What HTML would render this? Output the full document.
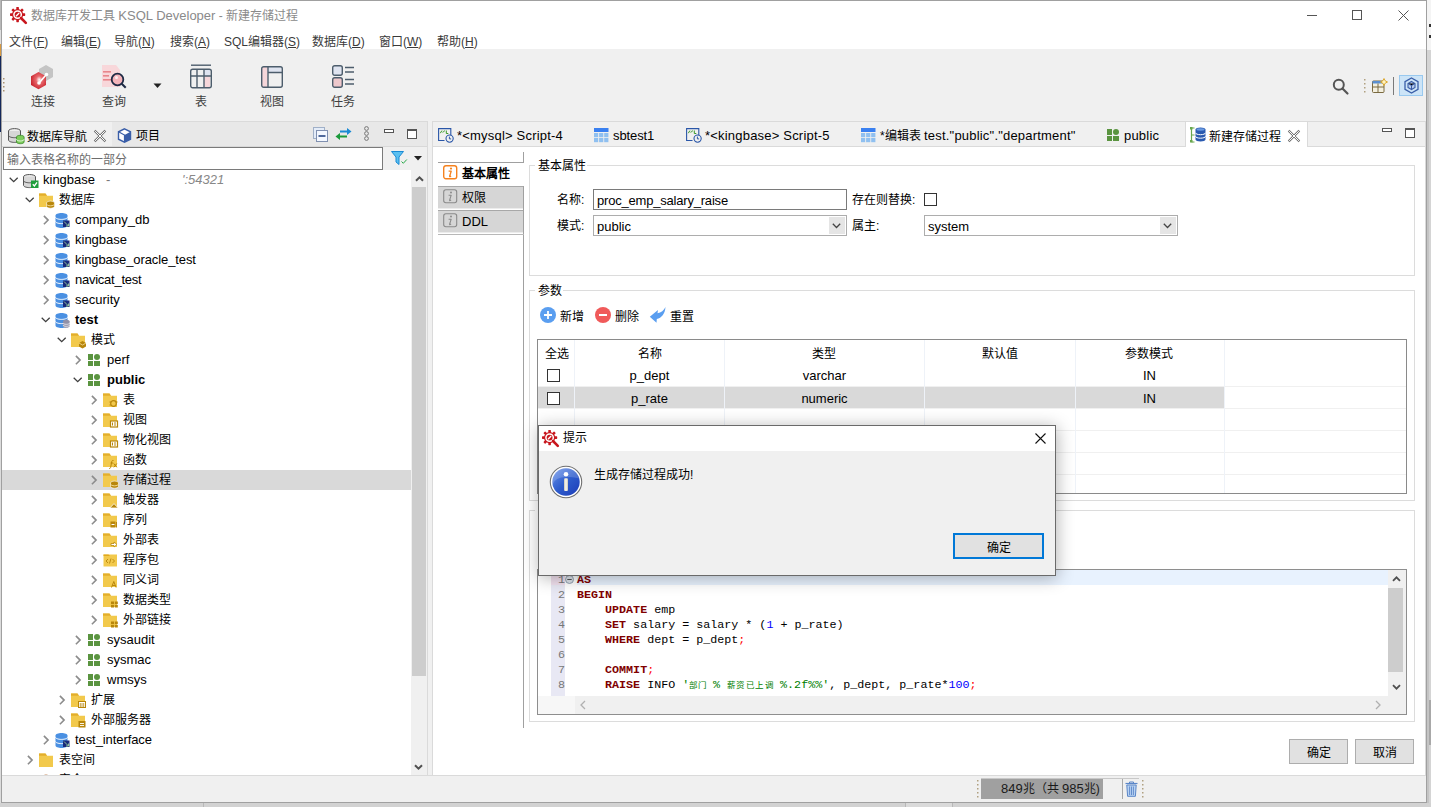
<!DOCTYPE html>
<html lang="zh-CN">
<head>
<meta charset="utf-8">
<style>
*{box-sizing:border-box}
html,body{margin:0;padding:0}
body{width:1431px;height:807px;position:relative;overflow:hidden;background:#e9e9e9;font-family:"Liberation Sans",sans-serif;font-size:12px;color:#000}
.a{position:absolute}
.t{position:absolute;white-space:nowrap;line-height:16px;font-size:12px}
.l{font-size:13px}
svg{position:absolute;overflow:visible}
</style>
</head>
<body>
<!-- desktop edges -->
<div class="a" style="left:0;top:0;width:1px;height:30px;background:#b8b8b8"></div>
<div class="a" style="left:0;top:30px;width:1px;height:14px;background:#e0e0e0"></div>
<div class="a" style="left:0;top:44px;width:1px;height:12px;background:#d89a40"></div>
<div class="a" style="left:0;top:56px;width:1px;height:76px;background:#14285a"></div>
<div class="a" style="left:0;top:132px;width:1px;height:675px;background:#dcdcdc"></div>
<div class="a" style="left:1427px;top:0;width:4px;height:50px;background:#f4f4f4"></div>
<div class="a" style="left:1429px;top:24px;width:2px;height:3px;background:#333"></div>
<div class="a" style="left:1429px;top:35px;width:2px;height:3px;background:#333"></div>
<div class="a" style="left:1427px;top:50px;width:4px;height:757px;background:#d4d4d4"></div>
<div class="a" style="left:1427px;top:90px;width:2px;height:717px;background:#c4c4c4"></div>
<div class="a" style="left:1429px;top:700px;width:2px;height:45px;background:#a8a8a8"></div>
<div class="a" style="left:0;top:803px;width:1431px;height:4px;background:#d2d2d2"></div>
<div class="a" style="left:203px;top:803px;width:1px;height:4px;background:#b8b8b8"></div>
<div class="a" style="left:905px;top:803px;width:48px;height:4px;background:#dadada;border-left:1px solid #b8b8b8;border-right:1px solid #b8b8b8"></div>
<!-- window -->
<div id="win" class="a" style="left:1px;top:0;width:1426px;height:803px;border:1px solid #a0a0a0;background:#f0f0f0">
</div>
<!-- title bar -->
<div class="a" style="left:2px;top:1px;width:1424px;height:48px;background:#fff"></div>
<!-- title -->
<svg style="left:10px;top:7px" width="17" height="17" viewBox="0 0 17 17">
 <g transform="translate(7.6 7.6)" fill="#c8161d">
  <circle r="5.6"/>
  <g id="teeth"><rect x="-1.3" y="-7.6" width="2.6" height="3" rx="0.6"/><rect x="-1.3" y="4.6" width="2.6" height="3" rx="0.6"/><rect x="-7.6" y="-1.3" width="3" height="2.6" rx="0.6"/><rect x="4.6" y="-1.3" width="3" height="2.6" rx="0.6"/>
  <g transform="rotate(45)"><rect x="-1.3" y="-7.6" width="2.6" height="3" rx="0.6"/><rect x="-1.3" y="4.6" width="2.6" height="3" rx="0.6"/><rect x="-7.6" y="-1.3" width="3" height="2.6" rx="0.6"/></g></g>
  <circle r="3.7" fill="none" stroke="#fff" stroke-width="1.5"/>
  <path d="M-1.6 1.6L1.6 -1.6" stroke="#fff" stroke-width="1.3"/>
 </g>
 <path d="M11 11l4.8 4.8" stroke="#c8161d" stroke-width="2.6" stroke-linecap="round"/>
</svg>
<div class="t" style="left:31px;top:8px;color:#8a8a8a">数据库开发工具 <span class="l">KSQL Developer</span> - 新建存储过程</div>
<div class="a" style="left:1307px;top:15px;width:10px;height:1px;background:#555"></div>
<div class="a" style="left:1352px;top:10px;width:10px;height:10px;border:1px solid #555"></div>
<svg style="left:1398px;top:10px" width="11" height="11"><path d="M0.5 0.5l10 10M10.5 0.5l-10 10" stroke="#555" stroke-width="1"/></svg>
<!-- menu -->
<div class="t" style="left:9px;top:34px;color:#3a3a3a">文件(<u>F</u>)</div>
<div class="t" style="left:61px;top:34px;color:#3a3a3a">编辑(<u>E</u>)</div>
<div class="t" style="left:114px;top:34px;color:#3a3a3a">导航(<u>N</u>)</div>
<div class="t" style="left:170px;top:34px;color:#3a3a3a">搜索(<u>A</u>)</div>
<div class="t" style="left:224px;top:34px;color:#3a3a3a">SQL编辑器(<u>S</u>)</div>
<div class="t" style="left:312px;top:34px;color:#3a3a3a">数据库(<u>D</u>)</div>
<div class="t" style="left:379px;top:34px;color:#3a3a3a">窗口(<u>W</u>)</div>
<div class="t" style="left:437px;top:34px;color:#3a3a3a">帮助(<u>H</u>)</div>

<!-- toolbar -->
<!-- toolbar grip -->
<svg style="left:3px;top:78px" width="3" height="16"><g fill="#a89070"><rect x="0" y="0" width="1.5" height="1.5"/><rect x="0" y="4" width="1.5" height="1.5"/><rect x="0" y="8" width="1.5" height="1.5"/><rect x="0" y="12" width="1.5" height="1.5"/></g></svg>
<!-- 连接 -->
<svg style="left:30px;top:64px" width="25" height="27" viewBox="0 0 25 27">
 <defs><radialGradient id="rg1" cx="0.55" cy="0.45" r="0.6"><stop offset="0" stop-color="#fff"/><stop offset="0.35" stop-color="#e86a6e"/><stop offset="1" stop-color="#c8202a"/></radialGradient></defs>
 <path d="M16 1l7 4v8l-7 4-7-4V5z" fill="#c4c4c4"/>
 <path d="M8.5 8l7.5 4.3v8.6L8.5 25.2 1 20.9v-8.6z" fill="url(#rg1)"/>
 <path d="M9 19l7-8" stroke="#fff" stroke-width="1.6"/>
 <circle cx="9" cy="19" r="1.8" fill="#fff"/><circle cx="16.5" cy="10.5" r="1.8" fill="#fff"/>
</svg>
<div class="t" style="left:31px;top:94px;color:#404040">连接</div>
<!-- 查询 -->
<svg style="left:101px;top:64px" width="27" height="26" viewBox="0 0 27 26">
 <path d="M1 1h14l4 5v17H1z" fill="#f8d7da"/>
 <g fill="#e8868c"><rect x="2" y="7" width="8" height="1.6"/><rect x="2" y="11" width="6" height="1.6"/><rect x="2" y="15" width="8" height="1.6"/></g>
 <circle cx="16.5" cy="15.5" r="5.8" fill="#f4b4ba" stroke="#1e2a44" stroke-width="1.8"/>
 <circle cx="15.5" cy="13.5" r="1.5" fill="#fff" opacity="0.8"/>
 <path d="M20.7 19.7l4 4" stroke="#1e2a44" stroke-width="2"/>
</svg>
<div class="t" style="left:102px;top:94px;color:#404040">查询</div>
<svg style="left:153px;top:83px" width="9" height="6"><path d="M0.5 0.5h8l-4 4.5z" fill="#222"/></svg>
<!-- 表 -->
<svg style="left:189px;top:64px" width="24" height="25" viewBox="0 0 24 25">
 <path d="M2 1.2h20" stroke="#4d5d6c" stroke-width="1.4"/>
 <rect x="15" y="6" width="6" height="6" fill="#dfe4f0"/>
 <rect x="15" y="12" width="6" height="11" fill="#f6d6da"/>
 <rect x="1.7" y="5.2" width="20.6" height="18.6" rx="2" fill="none" stroke="#4d5d6c" stroke-width="1.4"/>
 <path d="M1.7 12h20.6M8 5.2v18.6M15 5.2v18.6" stroke="#4d5d6c" stroke-width="1.4"/>
</svg>
<div class="t" style="left:195px;top:94px;color:#404040">表</div>
<!-- 视图 -->
<svg style="left:260px;top:65px" width="24" height="24" viewBox="0 0 24 24">
 <rect x="2" y="2" width="5.5" height="20" fill="#f6d6da"/>
 <rect x="7.5" y="2" width="14" height="5.5" fill="#dfe4f0"/>
 <rect x="1.7" y="1.7" width="20.6" height="20.6" rx="2" fill="none" stroke="#4d5d6c" stroke-width="1.4"/>
 <path d="M8 1.7v20.6M8 7.5h14.3" stroke="#4d5d6c" stroke-width="1.4"/>
</svg>
<div class="t" style="left:260px;top:94px;color:#404040">视图</div>
<!-- 任务 -->
<svg style="left:331px;top:64px" width="25" height="25" viewBox="0 0 25 25">
 <rect x="1.7" y="1.7" width="9.6" height="9.6" rx="2" fill="#dfe4f0" stroke="#4d5d6c" stroke-width="1.4"/>
 <rect x="1.7" y="13.7" width="9.6" height="9.6" rx="2" fill="#eec8cc" stroke="#4d5d6c" stroke-width="1.4"/>
 <path d="M14 3.5h9M14 8h9M14 15.5h9M14 20h9" stroke="#4d5d6c" stroke-width="1.4"/>
</svg>
<div class="t" style="left:331px;top:94px;color:#404040">任务</div>
<!-- right toolbar -->
<svg style="left:1332px;top:78px" width="18" height="18" viewBox="0 0 18 18">
 <circle cx="6.8" cy="6.8" r="5" fill="none" stroke="#555" stroke-width="2"/>
 <path d="M10.5 10.5l5 5" stroke="#555" stroke-width="2.2" stroke-linecap="round"/>
</svg>
<svg style="left:1364px;top:79px" width="3" height="15"><g fill="#b0a080"><rect x="0" y="0" width="1.5" height="1.5"/><rect x="0" y="4" width="1.5" height="1.5"/><rect x="0" y="8" width="1.5" height="1.5"/><rect x="0" y="12" width="1.5" height="1.5"/></g></svg>
<svg style="left:1372px;top:78px" width="16" height="16" viewBox="0 0 16 16">
 <rect x="0.5" y="3" width="11.5" height="11.5" rx="1" fill="#f4f0e0" stroke="#7a6a40" stroke-width="1"/>
 <rect x="0.5" y="3" width="11.5" height="2.5" fill="#5b8fd0"/>
 <path d="M0.5 9h11.5M6 5.5v9" stroke="#7a6a40" stroke-width="1"/>
 <path d="M12 0.5l1.2 2.3 2.3 1.2-2.3 1.2L12 7.5l-1.2-2.3-2.3-1.2 2.3-1.2z" fill="#fff3c0" stroke="#d8a020" stroke-width="0.9"/>
</svg>
<div class="a" style="left:1393px;top:77px;width:1px;height:18px;background:#7a7a7a"></div>
<div class="a" style="left:1399px;top:75px;width:24px;height:21px;background:#cce4f7;border:1px solid #99c9ef"></div>
<svg style="left:1403px;top:77px" width="17" height="17" viewBox="0 0 17 17">
 <path d="M8.5 1l6.5 3.75v7.5L8.5 16 2 12.25v-7.5z" fill="none" stroke="#3a5ea8" stroke-width="1.3"/>
 <path d="M8.5 4.5l3.5 2v4l-3.5 2-3.5-2v-4z" fill="#b8cdea" stroke="#3a5ea8" stroke-width="1.1"/>
 <path d="M5 6.5l3.5 2 3.5-2M8.5 8.5v4" stroke="#3a5ea8" stroke-width="1"/>
</svg>


<!-- left panel -->
<div class="a" style="left:2px;top:121px;width:426px;height:654px;background:#f0f0f0;border-top:1px solid #dadada;border-right:1px solid #dadada"></div>
<div class="a" style="left:2px;top:122px;width:425px;height:25px;background:#e8e8e8;border-bottom:1px solid #d8d8d8"></div>
<div class="a" style="left:2px;top:122px;width:110px;height:24px;background:#f0f0f0"></div>
<svg style="left:8px;top:128px" width="17" height="16" viewBox="0 0 17 16">
 <ellipse cx="6.5" cy="3" rx="6" ry="2.4" fill="#eee" stroke="#555" stroke-width="1"/>
 <path d="M0.5 3v9c0 1.3 2.7 2.4 6 2.4s6-1.1 6-2.4V3" fill="#d6d6d6" stroke="#555" stroke-width="1"/>
 <path d="M0.5 7.3c0 1.3 2.7 2.4 6 2.4s6-1.1 6-2.4" fill="none" stroke="#555" stroke-width="1"/>
 <path d="M8.5 9c0-1 1.7-1.7 3.8-1.7s3.8.7 3.8 1.7v5c0 1-1.7 1.7-3.8 1.7s-3.8-.7-3.8-1.7z" fill="#7ccc5a" stroke="#3a8a2a" stroke-width="0.8"/>
 <path d="M8.5 11.3c0 1 1.7 1.7 3.8 1.7s3.8-.7 3.8-1.7" fill="none" stroke="#fff" stroke-width="0.8"/>
</svg>
<div class="t" style="left:27px;top:129px;color:#000">数据库导航</div>
<svg style="left:94px;top:130px" width="12" height="12"><path d="M1.5 1.5l9 9M10.5 1.5l-9 9" stroke="#707070" stroke-width="2.4" stroke-linecap="square"/><path d="M1.5 1.5l9 9M10.5 1.5l-9 9" stroke="#fff" stroke-width="1" stroke-linecap="square"/></svg>
<svg style="left:117px;top:128px" width="15" height="15" viewBox="0 0 15 15">
 <path d="M7.5 0.8l6 3v7.4l-6 3-6-3V3.8z" fill="#fff" stroke="#3a5ea8" stroke-width="1.4"/>
 <path d="M7.5 7l6-3.2v7.4l-6 3z" fill="#3a5ea8"/>
 <path d="M1.5 3.8l6 3.2v7" fill="none" stroke="#3a5ea8" stroke-width="1.2"/>
</svg>
<div class="t" style="left:136px;top:128px;color:#000">项目</div>
<svg style="left:313px;top:127px" width="16" height="16" viewBox="0 0 16 16">
 <rect x="0.5" y="0.5" width="11" height="11" fill="#e4ecf8" stroke="#a0b0c8" stroke-width="1"/>
 <rect x="3.5" y="3.5" width="11" height="11" fill="#f4f8ff" stroke="#8090b0" stroke-width="1"/>
 <path d="M5.5 9h7" stroke="#1a3a7a" stroke-width="1.5"/>
</svg>
<svg style="left:335px;top:128px" width="17" height="13" viewBox="0 0 17 13">
 <path d="M5 3.5h8" stroke="#1a8ad4" stroke-width="2"/><path d="M12 0l4.5 3.5L12 7z" fill="#1a8ad4"/>
 <path d="M4 8.5h8" stroke="#1a9a3a" stroke-width="2"/><path d="M5 5L0.5 8.5 5 12z" fill="#1a9a3a"/>
</svg>
<svg style="left:363px;top:126px" width="7" height="16" viewBox="0 0 7 16">
 <circle cx="3.5" cy="2.5" r="1.9" fill="none" stroke="#777" stroke-width="1"/>
 <circle cx="3.5" cy="7.5" r="1.9" fill="none" stroke="#777" stroke-width="1"/>
 <circle cx="3.5" cy="12.5" r="1.9" fill="none" stroke="#777" stroke-width="1"/>
</svg>
<div class="a" style="left:384px;top:129px;width:10px;height:4px;border:1px solid #555;background:#fff"></div>
<div class="a" style="left:407px;top:129px;width:10px;height:10px;border:1px solid #555;border-top-width:2px;background:#fff"></div>
<div class="a" style="left:3px;top:147px;width:380px;height:23px;background:#fff;border:1px solid #7a7a7a"></div>
<div class="t" style="left:7px;top:152px;color:#6d6d6d">输入表格名称的一部分</div>
<svg style="left:391px;top:151px" width="17" height="14" viewBox="0 0 17 14">
 <path d="M0.5 0.5h12l-4.5 5.5v7.5l-3-2.5v-5z" fill="#5bc0f0" stroke="#1a8ad4" stroke-width="1"/>
 <path d="M10.5 10.5l1.8 1.8 3.5-3.8" stroke="#2aaa4a" stroke-width="1" fill="none"/>
</svg>
<svg style="left:414px;top:156px" width="9" height="5"><path d="M0 0h8l-4 4.5z" fill="#222"/></svg>
<div class="a" style="left:2px;top:170px;width:409px;height:605px;background:#fff"></div>
<div class="a" style="left:2px;top:470px;width:409px;height:20px;background:#d9d9d9"></div>
<svg style="left:9px;top:177px" width="10" height="7"><path d="M0.7 0.7l4 4 4-4" stroke="#404040" stroke-width="1.3" fill="none"/></svg>
<svg style="left:23px;top:174px" width="16" height="15" viewBox="0 0 16 15"><ellipse cx="6.5" cy="2.8" rx="6" ry="2.3" fill="#e6e6e6" stroke="#555" stroke-width="1"/><path d="M0.5 2.8v8.5c0 1.3 2.7 2.3 6 2.3s6-1 6-2.3V2.8" fill="#d8d8d8" stroke="#555" stroke-width="1"/><path d="M0.5 6.5c0 1.3 2.7 2.3 6 2.3s6-1 6-2.3" fill="none" stroke="#555" stroke-width="1"/><rect x="8" y="6.5" width="7.5" height="7.5" fill="#1f9e3c"/><path d="M9.8 10.2l1.6 1.8 2.6-3.6" stroke="#fff" stroke-width="1.3" fill="none"/></svg>
<div class="t l" style="left:43px;top:172px;">kingbase</div>
<div class="t l" style="left:106px;top:172px;color:#777">-</div>
<div class="t l" style="left:182px;top:172px;color:#888;font-style:italic">':54321</div>
<svg style="left:25px;top:197px" width="10" height="7"><path d="M0.7 0.7l4 4 4-4" stroke="#404040" stroke-width="1.3" fill="none"/></svg>
<svg style="left:39px;top:193px" width="16" height="15" viewBox="0 0 16 15"><path d="M0 0.5h6.5l1.5 2.2h6v11.3h-14z" fill="#f2c94c"/><path d="M0 0.5h6.5l1.5 2.2h-8z" fill="#e3ae2c"/><path d="M7.5 10c0-1.1 1.8-1.9 4-1.9s4 .8 4 1.9v3.3c0 1.1-1.8 1.9-4 1.9s-4-.8-4-1.9z" fill="#b8860b" stroke="#fff" stroke-width="0.6"/><path d="M7.5 11c0 1 1.8 1.8 4 1.8s4-.8 4-1.8" stroke="#f6e0a0" stroke-width="0.9" fill="none"/></svg>
<div class="t " style="left:59px;top:192px;">数据库</div>
<svg style="left:43px;top:215px" width="7" height="10"><path d="M0.9 0.9l4.2 4.2-4.2 4.2" stroke="#8c8c8c" stroke-width="1.6" fill="none"/></svg>
<svg style="left:55px;top:213px" width="16" height="15" viewBox="0 0 16 15"><path d="M0.5 2.5c0-1.4 2.7-2.5 6-2.5s6 1.1 6 2.5v10c0 1.4-2.7 2.5-6 2.5s-6-1.1-6-2.5z" fill="#4a90e2"/><path d="M0.5 4.2c0 1.2 2.7 2.2 6 2.2s6-1 6-2.2M0.5 8.4c0 1.2 2.7 2.2 6 2.2s6-1 6-2.2" stroke="#fff" stroke-width="1" fill="none"/><rect x="8" y="7.5" width="6.5" height="6.5" fill="#1a2a7a"/><path d="M9 8.5l4.5 4.5M11 13h2.5v-2.5" stroke="#9ad29a" stroke-width="0.9" fill="none"/></svg>
<div class="t l" style="left:75px;top:212px;">company_db</div>
<svg style="left:43px;top:235px" width="7" height="10"><path d="M0.9 0.9l4.2 4.2-4.2 4.2" stroke="#8c8c8c" stroke-width="1.6" fill="none"/></svg>
<svg style="left:55px;top:233px" width="16" height="15" viewBox="0 0 16 15"><path d="M0.5 2.5c0-1.4 2.7-2.5 6-2.5s6 1.1 6 2.5v10c0 1.4-2.7 2.5-6 2.5s-6-1.1-6-2.5z" fill="#4a90e2"/><path d="M0.5 4.2c0 1.2 2.7 2.2 6 2.2s6-1 6-2.2M0.5 8.4c0 1.2 2.7 2.2 6 2.2s6-1 6-2.2" stroke="#fff" stroke-width="1" fill="none"/><rect x="8" y="7.5" width="6.5" height="6.5" fill="#1a2a7a"/><path d="M9 8.5l4.5 4.5M11 13h2.5v-2.5" stroke="#9ad29a" stroke-width="0.9" fill="none"/></svg>
<div class="t l" style="left:75px;top:232px;">kingbase</div>
<svg style="left:43px;top:255px" width="7" height="10"><path d="M0.9 0.9l4.2 4.2-4.2 4.2" stroke="#8c8c8c" stroke-width="1.6" fill="none"/></svg>
<svg style="left:55px;top:253px" width="16" height="15" viewBox="0 0 16 15"><path d="M0.5 2.5c0-1.4 2.7-2.5 6-2.5s6 1.1 6 2.5v10c0 1.4-2.7 2.5-6 2.5s-6-1.1-6-2.5z" fill="#4a90e2"/><path d="M0.5 4.2c0 1.2 2.7 2.2 6 2.2s6-1 6-2.2M0.5 8.4c0 1.2 2.7 2.2 6 2.2s6-1 6-2.2" stroke="#fff" stroke-width="1" fill="none"/><rect x="8" y="7.5" width="6.5" height="6.5" fill="#1a2a7a"/><path d="M9 8.5l4.5 4.5M11 13h2.5v-2.5" stroke="#9ad29a" stroke-width="0.9" fill="none"/></svg>
<div class="t l" style="left:75px;top:252px;letter-spacing:-0.1px;">kingbase_oracle_test</div>
<svg style="left:43px;top:275px" width="7" height="10"><path d="M0.9 0.9l4.2 4.2-4.2 4.2" stroke="#8c8c8c" stroke-width="1.6" fill="none"/></svg>
<svg style="left:55px;top:273px" width="16" height="15" viewBox="0 0 16 15"><path d="M0.5 2.5c0-1.4 2.7-2.5 6-2.5s6 1.1 6 2.5v10c0 1.4-2.7 2.5-6 2.5s-6-1.1-6-2.5z" fill="#4a90e2"/><path d="M0.5 4.2c0 1.2 2.7 2.2 6 2.2s6-1 6-2.2M0.5 8.4c0 1.2 2.7 2.2 6 2.2s6-1 6-2.2" stroke="#fff" stroke-width="1" fill="none"/><rect x="8" y="7.5" width="6.5" height="6.5" fill="#1a2a7a"/><path d="M9 8.5l4.5 4.5M11 13h2.5v-2.5" stroke="#9ad29a" stroke-width="0.9" fill="none"/></svg>
<div class="t l" style="left:75px;top:272px;letter-spacing:-0.25px;">navicat_test</div>
<svg style="left:43px;top:295px" width="7" height="10"><path d="M0.9 0.9l4.2 4.2-4.2 4.2" stroke="#8c8c8c" stroke-width="1.6" fill="none"/></svg>
<svg style="left:55px;top:293px" width="16" height="15" viewBox="0 0 16 15"><path d="M0.5 2.5c0-1.4 2.7-2.5 6-2.5s6 1.1 6 2.5v10c0 1.4-2.7 2.5-6 2.5s-6-1.1-6-2.5z" fill="#4a90e2"/><path d="M0.5 4.2c0 1.2 2.7 2.2 6 2.2s6-1 6-2.2M0.5 8.4c0 1.2 2.7 2.2 6 2.2s6-1 6-2.2" stroke="#fff" stroke-width="1" fill="none"/><rect x="8" y="7.5" width="6.5" height="6.5" fill="#1a2a7a"/><path d="M9 8.5l4.5 4.5M11 13h2.5v-2.5" stroke="#9ad29a" stroke-width="0.9" fill="none"/></svg>
<div class="t l" style="left:75px;top:292px;">security</div>
<svg style="left:41px;top:317px" width="10" height="7"><path d="M0.7 0.7l4 4 4-4" stroke="#404040" stroke-width="1.3" fill="none"/></svg>
<svg style="left:55px;top:313px" width="16" height="15" viewBox="0 0 16 15"><path d="M0.5 2.5c0-1.4 2.7-2.5 6-2.5s6 1.1 6 2.5v10c0 1.4-2.7 2.5-6 2.5s-6-1.1-6-2.5z" fill="#4a90e2"/><path d="M0.5 4.2c0 1.2 2.7 2.2 6 2.2s6-1 6-2.2M0.5 8.4c0 1.2 2.7 2.2 6 2.2s6-1 6-2.2" stroke="#fff" stroke-width="1" fill="none"/><path d="M8 8.3c0-.9 1.5-1.5 3.3-1.5s3.3.6 3.3 1.5v5c0 .9-1.5 1.5-3.3 1.5S8 14.2 8 13.3z" fill="#9090a8"/><path d="M8 10c0 .8 1.5 1.3 3.3 1.3s3.3-.5 3.3-1.3M8 12c0 .8 1.5 1.3 3.3 1.3s3.3-.5 3.3-1.3" stroke="#fff" stroke-width="0.7" fill="none"/></svg>
<div class="t l" style="left:75px;top:312px;font-weight:bold;">test</div>
<svg style="left:57px;top:337px" width="10" height="7"><path d="M0.7 0.7l4 4 4-4" stroke="#404040" stroke-width="1.3" fill="none"/></svg>
<svg style="left:71px;top:333px" width="16" height="15" viewBox="0 0 16 15"><path d="M0 0.5h6.5l1.5 2.2h6v11.3h-14z" fill="#f2c94c"/><path d="M0 0.5h6.5l1.5 2.2h-8z" fill="#e3ae2c"/><path d="M11.5 8l3.5 2v3.5l-3.5 2-3.5-2V10z" fill="#b8860b"/><path d="M8 10l3.5 2 3.5-2" stroke="#f6e0a0" stroke-width="0.8" fill="none"/></svg>
<div class="t " style="left:91px;top:332px;">模式</div>
<svg style="left:75px;top:355px" width="7" height="10"><path d="M0.9 0.9l4.2 4.2-4.2 4.2" stroke="#8c8c8c" stroke-width="1.6" fill="none"/></svg>
<svg style="left:88px;top:354px" width="16" height="15" viewBox="0 0 16 15"><rect x="0" y="0" width="5" height="6" fill="#5a9440"/><circle cx="9" cy="3" r="3" fill="#5a9440"/><rect x="0" y="7" width="5" height="5" fill="#5a9440"/><rect x="6" y="7" width="6" height="5" fill="#5a9440"/></svg>
<div class="t l" style="left:107px;top:352px;">perf</div>
<svg style="left:73px;top:377px" width="10" height="7"><path d="M0.7 0.7l4 4 4-4" stroke="#404040" stroke-width="1.3" fill="none"/></svg>
<svg style="left:88px;top:374px" width="16" height="15" viewBox="0 0 16 15"><rect x="0" y="0" width="5" height="6" fill="#5a9440"/><circle cx="9" cy="3" r="3" fill="#5a9440"/><rect x="0" y="7" width="5" height="5" fill="#5a9440"/><rect x="6" y="7" width="6" height="5" fill="#5a9440"/></svg>
<div class="t l" style="left:107px;top:372px;font-weight:bold;">public</div>
<svg style="left:91px;top:395px" width="7" height="10"><path d="M0.9 0.9l4.2 4.2-4.2 4.2" stroke="#8c8c8c" stroke-width="1.6" fill="none"/></svg>
<svg style="left:103px;top:393px" width="16" height="15" viewBox="0 0 16 15"><path d="M0 0.5h6.5l1.5 2.2h6v11.3h-14z" fill="#f2c94c"/><path d="M0 0.5h6.5l1.5 2.2h-8z" fill="#e3ae2c"/><ellipse cx="10.5" cy="10.5" rx="2.8" ry="2.8" fill="none" stroke="#b8860b" stroke-width="1.2"/><path d="M6.5 9h1.5M6.5 12h1.5M13 9h1.5" stroke="#b8860b" stroke-width="1"/></svg>
<div class="t " style="left:123px;top:392px;">表</div>
<svg style="left:91px;top:415px" width="7" height="10"><path d="M0.9 0.9l4.2 4.2-4.2 4.2" stroke="#8c8c8c" stroke-width="1.6" fill="none"/></svg>
<svg style="left:103px;top:413px" width="16" height="15" viewBox="0 0 16 15"><path d="M0 0.5h6.5l1.5 2.2h6v11.3h-14z" fill="#f2c94c"/><path d="M0 0.5h6.5l1.5 2.2h-8z" fill="#e3ae2c"/><rect x="7.5" y="8" width="7" height="6" fill="#fff" stroke="#b8860b" stroke-width="1.2"/><path d="M9.5 9.5v3M11 10h2M11 12h2" stroke="#b8860b" stroke-width="1"/></svg>
<div class="t " style="left:123px;top:412px;">视图</div>
<svg style="left:91px;top:435px" width="7" height="10"><path d="M0.9 0.9l4.2 4.2-4.2 4.2" stroke="#8c8c8c" stroke-width="1.6" fill="none"/></svg>
<svg style="left:103px;top:433px" width="16" height="15" viewBox="0 0 16 15"><path d="M0 0.5h6.5l1.5 2.2h6v11.3h-14z" fill="#f2c94c"/><path d="M0 0.5h6.5l1.5 2.2h-8z" fill="#e3ae2c"/><rect x="7.5" y="8" width="7" height="6" fill="#fff" stroke="#b8860b" stroke-width="1.2"/><path d="M9.5 9.5v3M11 10h2M11 12h2" stroke="#b8860b" stroke-width="1"/></svg>
<div class="t " style="left:123px;top:432px;">物化视图</div>
<svg style="left:91px;top:455px" width="7" height="10"><path d="M0.9 0.9l4.2 4.2-4.2 4.2" stroke="#8c8c8c" stroke-width="1.6" fill="none"/></svg>
<svg style="left:103px;top:453px" width="16" height="15" viewBox="0 0 16 15"><path d="M0 0.5h6.5l1.5 2.2h6v11.3h-14z" fill="#f2c94c"/><path d="M0 0.5h6.5l1.5 2.2h-8z" fill="#e3ae2c"/><path d="M10.5 7.5c-1-.3-1.6.2-1.8 1.2l-1 5.5c-.2 1-.8 1.4-1.6 1.2M7.6 10h2.6M10.8 10.5l3 3.8M13.8 10.5l-3 3.8" stroke="#b8860b" stroke-width="1" fill="none"/></svg>
<div class="t " style="left:123px;top:452px;">函数</div>
<svg style="left:91px;top:475px" width="7" height="10"><path d="M0.9 0.9l4.2 4.2-4.2 4.2" stroke="#8c8c8c" stroke-width="1.6" fill="none"/></svg>
<svg style="left:103px;top:473px" width="16" height="15" viewBox="0 0 16 15"><path d="M0 0.5h6.5l1.5 2.2h6v11.3h-14z" fill="#f2c94c"/><path d="M0 0.5h6.5l1.5 2.2h-8z" fill="#e3ae2c"/><path d="M7.5 10c0-1.1 1.8-1.9 4-1.9s4 .8 4 1.9v3.3c0 1.1-1.8 1.9-4 1.9s-4-.8-4-1.9z" fill="#b8860b" stroke="#fff" stroke-width="0.6"/><path d="M7.5 11c0 1 1.8 1.8 4 1.8s4-.8 4-1.8" stroke="#f6e0a0" stroke-width="0.9" fill="none"/></svg>
<div class="t " style="left:123px;top:472px;">存储过程</div>
<svg style="left:91px;top:495px" width="7" height="10"><path d="M0.9 0.9l4.2 4.2-4.2 4.2" stroke="#8c8c8c" stroke-width="1.6" fill="none"/></svg>
<svg style="left:103px;top:493px" width="16" height="15" viewBox="0 0 16 15"><path d="M0 0.5h6.5l1.5 2.2h6v11.3h-14z" fill="#f2c94c"/><path d="M0 0.5h6.5l1.5 2.2h-8z" fill="#e3ae2c"/><path d="M6.8 15l4.2-4.4 4.2 4.4z" fill="#b8860b" stroke="#fff" stroke-width="0.8"/></svg>
<div class="t " style="left:123px;top:492px;">触发器</div>
<svg style="left:91px;top:515px" width="7" height="10"><path d="M0.9 0.9l4.2 4.2-4.2 4.2" stroke="#8c8c8c" stroke-width="1.6" fill="none"/></svg>
<svg style="left:103px;top:513px" width="16" height="15" viewBox="0 0 16 15"><path d="M0 0.5h6.5l1.5 2.2h6v11.3h-14z" fill="#f2c94c"/><path d="M0 0.5h6.5l1.5 2.2h-8z" fill="#e3ae2c"/><rect x="7.5" y="8.5" width="5" height="6" fill="#b8860b"/><path d="M8.5 11.5h3" stroke="#fff" stroke-width="1"/><path d="M13.5 9v5.5" stroke="#b8860b" stroke-width="1"/></svg>
<div class="t " style="left:123px;top:512px;">序列</div>
<svg style="left:91px;top:535px" width="7" height="10"><path d="M0.9 0.9l4.2 4.2-4.2 4.2" stroke="#8c8c8c" stroke-width="1.6" fill="none"/></svg>
<svg style="left:103px;top:533px" width="16" height="15" viewBox="0 0 16 15"><path d="M0 0.5h6.5l1.5 2.2h6v11.3h-14z" fill="#f2c94c"/><path d="M0 0.5h6.5l1.5 2.2h-8z" fill="#e3ae2c"/><path d="M8 10.5h3v-1.5l3 2.5-3 2.5v-1.5h-3z" fill="#fff" stroke="#b8860b" stroke-width="0.8"/></svg>
<div class="t " style="left:123px;top:532px;">外部表</div>
<svg style="left:91px;top:555px" width="7" height="10"><path d="M0.9 0.9l4.2 4.2-4.2 4.2" stroke="#8c8c8c" stroke-width="1.6" fill="none"/></svg>
<svg style="left:103px;top:553px" width="16" height="15" viewBox="0 0 16 15"><rect x="0.5" y="1.5" width="13.5" height="12" fill="#f2c94c"/><path d="M0.5 1.5h5l1.5 1.5h-6.5z" fill="#e0a820"/><path d="M5 6l-2 2 2 2M9.5 6l2 2-2 2M8 5.5l-1.5 5" stroke="#b8860b" stroke-width="0.9" fill="none"/></svg>
<div class="t " style="left:123px;top:552px;">程序包</div>
<svg style="left:91px;top:575px" width="7" height="10"><path d="M0.9 0.9l4.2 4.2-4.2 4.2" stroke="#8c8c8c" stroke-width="1.6" fill="none"/></svg>
<svg style="left:103px;top:573px" width="16" height="15" viewBox="0 0 16 15"><path d="M0 0.5h6.5l1.5 2.2h6v11.3h-14z" fill="#f2c94c"/><path d="M0 0.5h6.5l1.5 2.2h-8z" fill="#e3ae2c"/><path d="M8.5 14.5l2.3-6 2.3 6M9.3 12.5h3" stroke="#b8860b" stroke-width="1" fill="none"/></svg>
<div class="t " style="left:123px;top:572px;">同义词</div>
<svg style="left:91px;top:595px" width="7" height="10"><path d="M0.9 0.9l4.2 4.2-4.2 4.2" stroke="#8c8c8c" stroke-width="1.6" fill="none"/></svg>
<svg style="left:103px;top:593px" width="16" height="15" viewBox="0 0 16 15"><path d="M0 0.5h6.5l1.5 2.2h6v11.3h-14z" fill="#f2c94c"/><path d="M0 0.5h6.5l1.5 2.2h-8z" fill="#e3ae2c"/><rect x="8" y="8.5" width="3" height="2.6" fill="#b8860b"/><rect x="11.8" y="8.5" width="3" height="2.6" fill="#b8860b"/><rect x="8" y="11.9" width="3" height="2.6" fill="#b8860b"/><rect x="11.8" y="11.9" width="3" height="2.6" fill="#b8860b"/></svg>
<div class="t " style="left:123px;top:592px;">数据类型</div>
<svg style="left:91px;top:615px" width="7" height="10"><path d="M0.9 0.9l4.2 4.2-4.2 4.2" stroke="#8c8c8c" stroke-width="1.6" fill="none"/></svg>
<svg style="left:103px;top:613px" width="16" height="15" viewBox="0 0 16 15"><path d="M0 0.5h6.5l1.5 2.2h6v11.3h-14z" fill="#f2c94c"/><path d="M0 0.5h6.5l1.5 2.2h-8z" fill="#e3ae2c"/><rect x="8" y="8.5" width="3" height="2.6" fill="#b8860b"/><rect x="11.8" y="8.5" width="3" height="2.6" fill="#b8860b"/><rect x="8" y="11.9" width="3" height="2.6" fill="#b8860b"/><rect x="11.8" y="11.9" width="3" height="2.6" fill="#b8860b"/></svg>
<div class="t " style="left:123px;top:612px;">外部链接</div>
<svg style="left:75px;top:635px" width="7" height="10"><path d="M0.9 0.9l4.2 4.2-4.2 4.2" stroke="#8c8c8c" stroke-width="1.6" fill="none"/></svg>
<svg style="left:88px;top:634px" width="16" height="15" viewBox="0 0 16 15"><rect x="0" y="0" width="5" height="6" fill="#5a9440"/><circle cx="9" cy="3" r="3" fill="#5a9440"/><rect x="0" y="7" width="5" height="5" fill="#5a9440"/><rect x="6" y="7" width="6" height="5" fill="#5a9440"/></svg>
<div class="t l" style="left:107px;top:632px;">sysaudit</div>
<svg style="left:75px;top:655px" width="7" height="10"><path d="M0.9 0.9l4.2 4.2-4.2 4.2" stroke="#8c8c8c" stroke-width="1.6" fill="none"/></svg>
<svg style="left:88px;top:654px" width="16" height="15" viewBox="0 0 16 15"><rect x="0" y="0" width="5" height="6" fill="#5a9440"/><circle cx="9" cy="3" r="3" fill="#5a9440"/><rect x="0" y="7" width="5" height="5" fill="#5a9440"/><rect x="6" y="7" width="6" height="5" fill="#5a9440"/></svg>
<div class="t l" style="left:107px;top:652px;">sysmac</div>
<svg style="left:75px;top:675px" width="7" height="10"><path d="M0.9 0.9l4.2 4.2-4.2 4.2" stroke="#8c8c8c" stroke-width="1.6" fill="none"/></svg>
<svg style="left:88px;top:674px" width="16" height="15" viewBox="0 0 16 15"><rect x="0" y="0" width="5" height="6" fill="#5a9440"/><circle cx="9" cy="3" r="3" fill="#5a9440"/><rect x="0" y="7" width="5" height="5" fill="#5a9440"/><rect x="6" y="7" width="6" height="5" fill="#5a9440"/></svg>
<div class="t l" style="left:107px;top:672px;">wmsys</div>
<svg style="left:59px;top:695px" width="7" height="10"><path d="M0.9 0.9l4.2 4.2-4.2 4.2" stroke="#8c8c8c" stroke-width="1.6" fill="none"/></svg>
<svg style="left:71px;top:693px" width="16" height="15" viewBox="0 0 16 15"><path d="M0 0.5h6.5l1.5 2.2h6v11.3h-14z" fill="#f2c94c"/><path d="M0 0.5h6.5l1.5 2.2h-8z" fill="#e3ae2c"/><rect x="7.5" y="8.5" width="7" height="6" fill="#fff" stroke="#b8860b" stroke-width="1"/><path d="M9.3 10v4M11 10v4M12.7 10v4" stroke="#b8860b" stroke-width="0.8"/></svg>
<div class="t " style="left:91px;top:692px;">扩展</div>
<svg style="left:59px;top:715px" width="7" height="10"><path d="M0.9 0.9l4.2 4.2-4.2 4.2" stroke="#8c8c8c" stroke-width="1.6" fill="none"/></svg>
<svg style="left:71px;top:713px" width="16" height="15" viewBox="0 0 16 15"><path d="M0 0.5h6.5l1.5 2.2h6v11.3h-14z" fill="#f2c94c"/><path d="M0 0.5h6.5l1.5 2.2h-8z" fill="#e3ae2c"/><rect x="7.5" y="8" width="7" height="6.5" fill="#b8860b"/><path d="M9 10.5h4M9 12.5h4" stroke="#fff" stroke-width="0.9"/></svg>
<div class="t " style="left:91px;top:712px;">外部服务器</div>
<svg style="left:43px;top:735px" width="7" height="10"><path d="M0.9 0.9l4.2 4.2-4.2 4.2" stroke="#8c8c8c" stroke-width="1.6" fill="none"/></svg>
<svg style="left:55px;top:733px" width="16" height="15" viewBox="0 0 16 15"><path d="M0.5 2.5c0-1.4 2.7-2.5 6-2.5s6 1.1 6 2.5v10c0 1.4-2.7 2.5-6 2.5s-6-1.1-6-2.5z" fill="#4a90e2"/><path d="M0.5 4.2c0 1.2 2.7 2.2 6 2.2s6-1 6-2.2M0.5 8.4c0 1.2 2.7 2.2 6 2.2s6-1 6-2.2" stroke="#fff" stroke-width="1" fill="none"/><rect x="8" y="7.5" width="6.5" height="6.5" fill="#1a2a7a"/><path d="M9 8.5l4.5 4.5M11 13h2.5v-2.5" stroke="#9ad29a" stroke-width="0.9" fill="none"/></svg>
<div class="t l" style="left:75px;top:732px;letter-spacing:-0.08px;">test_interface</div>
<svg style="left:27px;top:755px" width="7" height="10"><path d="M0.9 0.9l4.2 4.2-4.2 4.2" stroke="#8c8c8c" stroke-width="1.6" fill="none"/></svg>
<svg style="left:39px;top:753px" width="16" height="15" viewBox="0 0 16 15"><path d="M0 0.5h6.5l1.5 2.2h6v11.3h-14z" fill="#f2c94c"/><path d="M0 0.5h6.5l1.5 2.2h-8z" fill="#e3ae2c"/></svg>
<div class="t " style="left:59px;top:752px;">表空间</div>
<svg style="left:27px;top:775px" width="7" height="10"><path d="M0.9 0.9l4.2 4.2-4.2 4.2" stroke="#8c8c8c" stroke-width="1.6" fill="none"/></svg>
<svg style="left:39px;top:773px" width="16" height="15" viewBox="0 0 16 15"><path d="M1 14c0-3 2.5-5 6-5s6 2 6 5z" fill="#b07040"/><circle cx="7" cy="5" r="3.5" fill="#c08050"/></svg>
<div class="t " style="left:59px;top:772px;">安全</div>
<div class="a" style="left:2px;top:775px;width:426px;height:26px;background:#f0f0f0;border-top:1px solid #dadada"></div>
<div class="a" style="left:411px;top:170px;width:16px;height:605px;background:#f0f0f0"></div>
<svg style="left:415px;top:176px" width="9" height="6"><path d="M1 4.8l3.5-3.5 3.5 3.5" stroke="#505050" stroke-width="2" fill="none"/></svg>
<div class="a" style="left:412px;top:187px;width:14px;height:489px;background:#cdcdcd"></div>
<svg style="left:414px;top:764px" width="9" height="6"><path d="M1 1.2l3.5 3.5 3.5-3.5" stroke="#505050" stroke-width="2" fill="none"/></svg>
<!-- right panel -->
<div class="a" style="left:432px;top:121px;width:994px;height:654px;background:#fff;border-top:1px solid #dadada;border-left:1px solid #dadada;border-right:1px solid #dadada"></div>
<div class="a" style="left:433px;top:122px;width:992px;height:25px;background:#f0f0f0;border-bottom:1px solid #dadada"></div>
<svg style="left:438px;top:128px" width="16" height="15" viewBox="0 0 16 15">
 <path d="M6.5 12.5H0.6V0.6h12.2v6.5" fill="none" stroke="#2a56a8" stroke-width="1.1"/>
 <path d="M2.3 5.2l1.6-2.6M4.8 4.6c.6-1.6 1.4-2 2.2-1.4M8.3 2.5v3h2" stroke="#3a9a2a" stroke-width="1" fill="none"/>
 <circle cx="11.6" cy="10.6" r="3.6" fill="#f0f0f0" stroke="#2a56a8" stroke-width="1.1"/>
 <path d="M11.4 8.6v2.3h1.7" stroke="#2a56a8" stroke-width="1" fill="none"/>
</svg>
<div class="t l" style="left:457px;top:128px;letter-spacing:0.2px">*&lt;mysql&gt; Script-4</div>
<svg style="left:594px;top:128px" width="15" height="15" viewBox="0 0 15 15">
 <rect x="0" y="0" width="14.5" height="4" fill="#3a80f0"/>
 <g fill="#90c0f0"><rect x="0" y="5" width="4.2" height="4.2"/><rect x="5.1" y="5" width="4.2" height="4.2"/><rect x="10.2" y="5" width="4.2" height="4.2"/>
 <rect x="0" y="10" width="4.2" height="4.2"/><rect x="5.1" y="10" width="4.2" height="4.2"/><rect x="10.2" y="10" width="4.2" height="4.2"/></g>
</svg>
<div class="t l" style="left:613px;top:128px;letter-spacing:-0.1px">sbtest1</div>
<svg style="left:686px;top:128px" width="16" height="15" viewBox="0 0 16 15">
 <path d="M6.5 12.5H0.6V0.6h12.2v6.5" fill="none" stroke="#2a56a8" stroke-width="1.1"/>
 <path d="M2.3 5.2l1.6-2.6M4.8 4.6c.6-1.6 1.4-2 2.2-1.4M8.3 2.5v3h2" stroke="#3a9a2a" stroke-width="1" fill="none"/>
 <circle cx="11.6" cy="10.6" r="3.6" fill="#f0f0f0" stroke="#2a56a8" stroke-width="1.1"/>
 <path d="M11.4 8.6v2.3h1.7" stroke="#2a56a8" stroke-width="1" fill="none"/>
</svg>
<div class="t l" style="left:705px;top:128px;letter-spacing:0.2px">*&lt;kingbase&gt; Script-5</div>
<svg style="left:861px;top:128px" width="15" height="15" viewBox="0 0 15 15">
 <rect x="0" y="0" width="14.5" height="4" fill="#3a80f0"/>
 <g fill="#90c0f0"><rect x="0" y="5" width="4.2" height="4.2"/><rect x="5.1" y="5" width="4.2" height="4.2"/><rect x="10.2" y="5" width="4.2" height="4.2"/>
 <rect x="0" y="10" width="4.2" height="4.2"/><rect x="5.1" y="10" width="4.2" height="4.2"/><rect x="10.2" y="10" width="4.2" height="4.2"/></g>
</svg>
<div class="t" style="left:880px;top:128px">*编辑表 <span class="l" style="letter-spacing:0.2px">test."public"."department"</span></div>
<svg style="left:1107px;top:129px" width="12" height="12" viewBox="0 0 12 12"><rect x="0" y="0" width="5" height="6" fill="#5a9440"/><circle cx="9" cy="3" r="3" fill="#5a9440"/>
 <rect x="0" y="7" width="5" height="5" fill="#5a9440"/><rect x="6" y="7" width="6" height="5" fill="#5a9440"/></svg>
<div class="t l" style="left:1124px;top:128px;letter-spacing:0.2px">public</div>
<div class="a" style="left:1185px;top:122px;width:123px;height:25px;background:#fff;border-left:1px solid #dadada;border-right:1px solid #dadada"></div>
<svg style="left:1190px;top:127px" width="17" height="16" viewBox="0 0 17 16">
 <path d="M1.5 1v14M1.5 1h3M1.5 8h3M1.5 15h3" stroke="#6aa84f" stroke-width="1.2" fill="none"/>
 <rect x="0" y="0" width="2.5" height="2.5" fill="#6aa84f"/><rect x="0" y="13" width="2.5" height="2.5" fill="#6aa84f"/>
 <path d="M5.5 2.5c0-1.2 2.3-2 5-2s5 .8 5 2v10c0 1.2-2.3 2-5 2s-5-.8-5-2z" fill="#2a5ab0"/>
 <path d="M5.5 5.8c0 1.1 2.3 1.9 5 1.9s5-.8 5-1.9M5.5 9.3c0 1.1 2.3 1.9 5 1.9s5-.8 5-1.9" stroke="#fff" stroke-width="1" fill="none"/>
 <ellipse cx="10.5" cy="2.5" rx="4" ry="1.2" fill="#6a9ae0"/>
</svg>
<div class="t" style="left:1209px;top:129px">新建存储过程</div>
<svg style="left:1288px;top:130px" width="12" height="12"><path d="M1.5 1.5l9 9M10.5 1.5l-9 9" stroke="#707070" stroke-width="2.4" stroke-linecap="square"/><path d="M1.5 1.5l9 9M10.5 1.5l-9 9" stroke="#fff" stroke-width="1" stroke-linecap="square"/></svg>
<div class="a" style="left:1382px;top:128px;width:10px;height:4px;border:1px solid #555;background:#fff"></div>
<div class="a" style="left:1405px;top:128px;width:10px;height:10px;border:1px solid #555;border-top-width:2px;background:#fff"></div>
<div class="a" style="left:523px;top:152px;width:1px;height:11px;background:#a0a0a0"></div>
<div class="a" style="left:523px;top:186px;width:1px;height:542px;background:#a0a0a0"></div>
<div class="a" style="left:438px;top:162px;width:86px;height:1px;background:#a0a0a0"></div>
<svg style="left:443px;top:165px" width="15" height="15" viewBox="0 0 15 15">
 <rect x="0.7" y="0.7" width="13" height="13" rx="2.2" fill="#fff" stroke="#f5821f" stroke-width="1.4"/>
 <circle cx="8" cy="3.6" r="1.1" fill="#f5821f"/>
 <path d="M5.6 6.2h2.6l-1.6 5c-.1.4.1.6.5.4l1-.6" stroke="#f5821f" stroke-width="1.3" fill="none" stroke-linejoin="round"/>
</svg>
<div class="t" style="left:462px;top:166px;font-weight:bold">基本属性</div>
<div class="a" style="left:438px;top:186px;width:85px;height:23px;background:#d6d6d6;border-top:1px solid #a8a8a8;border-bottom:1px solid #ececec"></div>
<svg style="left:443px;top:189px" width="15" height="15" viewBox="0 0 15 15">
 <rect x="0.7" y="0.7" width="13" height="13" rx="2.2" fill="#d6d6d6" stroke="#8a8a8a" stroke-width="1.1"/>
 <circle cx="8" cy="3.6" r="1" fill="#8a8a8a"/>
 <path d="M5.6 6.2h2.6l-1.6 5c-.1.4.1.6.5.4l1-.6" stroke="#8a8a8a" stroke-width="1.1" fill="none" stroke-linejoin="round"/>
</svg>
<div class="t " style="left:462px;top:190px">权限</div>
<div class="a" style="left:438px;top:210px;width:85px;height:23px;background:#d6d6d6;border-top:1px solid #a8a8a8;border-bottom:1px solid #ececec"></div>
<svg style="left:443px;top:213px" width="15" height="15" viewBox="0 0 15 15">
 <rect x="0.7" y="0.7" width="13" height="13" rx="2.2" fill="#d6d6d6" stroke="#8a8a8a" stroke-width="1.1"/>
 <circle cx="8" cy="3.6" r="1" fill="#8a8a8a"/>
 <path d="M5.6 6.2h2.6l-1.6 5c-.1.4.1.6.5.4l1-.6" stroke="#8a8a8a" stroke-width="1.1" fill="none" stroke-linejoin="round"/>
</svg>
<div class="t l" style="left:462px;top:214px">DDL</div>
<div class="a" style="left:438px;top:234px;width:86px;height:1px;background:#b8b8b8"></div>
<div class="a" style="left:529px;top:165px;width:886px;height:111px;border:1px solid #dcdcdc"></div>
<div class="a" style="left:535px;top:163px;width:52px;height:4px;background:#fff"></div>
<div class="t" style="left:538px;top:158px">基本属性</div>
<div class="t" style="left:557px;top:192px">名称:</div>
<div class="a" style="left:593px;top:189px;width:254px;height:21px;border:1px solid #7a7a7a;background:#fff"></div>
<div class="t l" style="left:597px;top:193px;letter-spacing:-0.2px">proc_emp_salary_raise</div>
<div class="t" style="left:852px;top:192px">存在则替换:</div>
<div class="a" style="left:924px;top:193px;width:13px;height:13px;border:1px solid #333;background:#fff"></div>
<div class="t" style="left:557px;top:218px">模式:</div>
<div class="a" style="left:593px;top:215px;width:254px;height:21px;border:1px solid #adadad;background:#fff"></div>
<div class="a" style="left:829px;top:217px;width:16px;height:17px;background:#e5e5e5"></div>
<svg style="left:832px;top:223px" width="9" height="6"><path d="M0.8 0.8l3.7 3.7 3.7-3.7" stroke="#444" stroke-width="1.3" fill="none"/></svg>
<div class="t l" style="left:597px;top:219px">public</div>
<div class="t" style="left:852px;top:218px">属主:</div>
<div class="a" style="left:924px;top:215px;width:254px;height:21px;border:1px solid #adadad;background:#fff"></div>
<div class="a" style="left:1160px;top:217px;width:16px;height:17px;background:#e5e5e5"></div>
<svg style="left:1163px;top:223px" width="9" height="6"><path d="M0.8 0.8l3.7 3.7 3.7-3.7" stroke="#444" stroke-width="1.3" fill="none"/></svg>
<div class="t l" style="left:928px;top:219px">system</div>
<div class="a" style="left:529px;top:290px;width:886px;height:211px;border:1px solid #dcdcdc"></div>
<div class="a" style="left:535px;top:288px;width:28px;height:4px;background:#fff"></div>
<div class="t" style="left:538px;top:283px">参数</div>
<svg style="left:540px;top:307px" width="16" height="16" viewBox="0 0 16 16"><circle cx="8" cy="8" r="8" fill="#5a9ef0"/><path d="M8 4v8M4 8h8" stroke="#fff" stroke-width="1.8"/></svg>
<div class="t" style="left:560px;top:309px">新增</div>
<svg style="left:595px;top:307px" width="16" height="16" viewBox="0 0 16 16"><circle cx="8" cy="8" r="8" fill="#f05a5a"/><path d="M4 8h8" stroke="#fff" stroke-width="2"/></svg>
<div class="t" style="left:615px;top:309px">删除</div>
<svg style="left:649px;top:307px" width="18" height="16" viewBox="0 0 18 16"><path d="M16.5 0C15 3.5 12 5.5 8.5 6.2L9 3 0.8 9.8 7.5 15.8 7.8 12C12.5 11 16 7 16.5 0z" fill="#5a9ef0"/></svg>
<div class="t" style="left:670px;top:309px">重置</div>
<div class="a" style="left:537px;top:339px;width:870px;height:155px;border:1px solid #8a8a8a;background:#fff"></div>
<div class="a" style="left:538px;top:387px;width:687px;height:21px;background:#d9d9d9"></div>
<div class="a" style="left:538px;top:386px;width:868px;height:1px;background:#f0f0f0"></div>
<div class="a" style="left:538px;top:408px;width:868px;height:1px;background:#f0f0f0"></div>
<div class="a" style="left:538px;top:430px;width:868px;height:1px;background:#f0f0f0"></div>
<div class="a" style="left:538px;top:452px;width:868px;height:1px;background:#f0f0f0"></div>
<div class="a" style="left:538px;top:474px;width:868px;height:1px;background:#f0f0f0"></div>
<div class="a" style="left:574px;top:340px;width:1px;height:153px;background:#eef2f8"></div>
<div class="a" style="left:724px;top:340px;width:1px;height:153px;background:#eef2f8"></div>
<div class="a" style="left:924px;top:340px;width:1px;height:153px;background:#eef2f8"></div>
<div class="a" style="left:1075px;top:340px;width:1px;height:153px;background:#eef2f8"></div>
<div class="a" style="left:1224px;top:340px;width:1px;height:153px;background:#eef2f8"></div>
<div class="t" style="left:545px;top:346px">全选</div>
<div class="t" style="left:638px;top:346px">名称</div>
<div class="t" style="left:812px;top:346px">类型</div>
<div class="t" style="left:982px;top:346px">默认值</div>
<div class="t" style="left:1125px;top:346px">参数模式</div>
<div class="a" style="left:547px;top:369px;width:13px;height:13px;border:1px solid #333;background:#fff"></div>
<div class="t l" style="left:575px;top:368px;width:149px;text-align:center">p_dept</div>
<div class="t l" style="left:725px;top:368px;width:199px;text-align:center">varchar</div>
<div class="t l" style="left:1075px;top:368px;width:149px;text-align:center">IN</div>
<div class="a" style="left:547px;top:392px;width:13px;height:13px;border:1px solid #333;background:#fff"></div>
<div class="t l" style="left:575px;top:391px;width:149px;text-align:center">p_rate</div>
<div class="t l" style="left:725px;top:391px;width:199px;text-align:center">numeric</div>
<div class="t l" style="left:1075px;top:391px;width:149px;text-align:center">IN</div>
<div class="a" style="left:529px;top:510px;width:886px;height:212px;border:1px solid #dcdcdc"></div>
<div class="a" style="left:535px;top:508px;width:28px;height:4px;background:#fff"></div>
<div class="t" style="left:538px;top:503px">DDL</div>
<div class="a" style="left:537px;top:569px;width:870px;height:146px;border:1px solid #8e8e8e;background:#fff"></div>
<div class="a" style="left:577px;top:570px;width:811px;height:15px;background:#e8f2fe"></div>
<div class="a" style="left:551px;top:570px;width:14px;height:127px;background:#e8e8f4"></div>
<div class="a" style="left:551px;top:570px;width:14px;height:15px;background:#f0e0ee"></div>
<div class="a" style="left:538px;top:573px;width:850px;height:123px;overflow:hidden">
<div class="a" style="left:0;top:0px;width:27px;text-align:right;font-family:'Liberation Mono',monospace;font-size:11.7px;line-height:15px;color:#787878">1</div>
<div class="a" style="left:39px;top:0px;white-space:pre;font-family:'Liberation Mono',monospace;font-size:11.7px;line-height:15px;color:#000"><b style="color:#800000">AS</b></div>
<div class="a" style="left:0;top:15px;width:27px;text-align:right;font-family:'Liberation Mono',monospace;font-size:11.7px;line-height:15px;color:#787878">2</div>
<div class="a" style="left:39px;top:15px;white-space:pre;font-family:'Liberation Mono',monospace;font-size:11.7px;line-height:15px;color:#000"><b style="color:#800000">BEGIN</b></div>
<div class="a" style="left:0;top:30px;width:27px;text-align:right;font-family:'Liberation Mono',monospace;font-size:11.7px;line-height:15px;color:#787878">3</div>
<div class="a" style="left:39px;top:30px;white-space:pre;font-family:'Liberation Mono',monospace;font-size:11.7px;line-height:15px;color:#000">    <b style="color:#800000">UPDATE</b> emp</div>
<div class="a" style="left:0;top:45px;width:27px;text-align:right;font-family:'Liberation Mono',monospace;font-size:11.7px;line-height:15px;color:#787878">4</div>
<div class="a" style="left:39px;top:45px;white-space:pre;font-family:'Liberation Mono',monospace;font-size:11.7px;line-height:15px;color:#000">    <b style="color:#800000">SET</b> salary = salary * (<span style="color:#0000ff">1</span> + p_rate)</div>
<div class="a" style="left:0;top:60px;width:27px;text-align:right;font-family:'Liberation Mono',monospace;font-size:11.7px;line-height:15px;color:#787878">5</div>
<div class="a" style="left:39px;top:60px;white-space:pre;font-family:'Liberation Mono',monospace;font-size:11.7px;line-height:15px;color:#000">    <b style="color:#800000">WHERE</b> dept = p_dept<span style="color:#ff0000">;</span></div>
<div class="a" style="left:0;top:75px;width:27px;text-align:right;font-family:'Liberation Mono',monospace;font-size:11.7px;line-height:15px;color:#787878">6</div>
<div class="a" style="left:39px;top:75px;white-space:pre;font-family:'Liberation Mono',monospace;font-size:11.7px;line-height:15px;color:#000"></div>
<div class="a" style="left:0;top:90px;width:27px;text-align:right;font-family:'Liberation Mono',monospace;font-size:11.7px;line-height:15px;color:#787878">7</div>
<div class="a" style="left:39px;top:90px;white-space:pre;font-family:'Liberation Mono',monospace;font-size:11.7px;line-height:15px;color:#000">    <b style="color:#800000">COMMIT</b><span style="color:#ff0000">;</span></div>
<div class="a" style="left:0;top:105px;width:27px;text-align:right;font-family:'Liberation Mono',monospace;font-size:11.7px;line-height:15px;color:#787878">8</div>
<div class="a" style="left:39px;top:105px;white-space:pre;font-family:'Liberation Mono',monospace;font-size:11.7px;line-height:15px;color:#000">    <b style="color:#800000">RAISE</b> INFO <span style="color:#008000">'<span style="font-size:8.5px;letter-spacing:0.2px">部门 </span>% <span style="font-size:8.5px;letter-spacing:0.5px">薪资已上调 </span>%.2f%%'</span>, p_dept, p_rate*<span style="color:#0000ff">100</span><span style="color:#ff0000">;</span></div>
<div class="a" style="left:0;top:120px;width:27px;text-align:right;font-family:'Liberation Mono',monospace;font-size:11.7px;line-height:15px;color:#787878">9</div>
<div class="a" style="left:39px;top:120px;white-space:pre;font-family:'Liberation Mono',monospace;font-size:11.7px;line-height:15px;color:#000"><b style="color:#800000">END</b></div>
</div>
<div class="a" style="left:1388px;top:570px;width:18px;height:127px;background:#f0f0f0"></div>
<svg style="left:1392px;top:576px" width="9" height="6"><path d="M1 4.8l3.5-3.5 3.5 3.5" stroke="#505050" stroke-width="1.8" fill="none"/></svg>
<div class="a" style="left:1388px;top:588px;width:15px;height:84px;background:#cdcdcd"></div>
<svg style="left:1392px;top:684px" width="9" height="6"><path d="M1 1.2l3.5 3.5 3.5-3.5" stroke="#505050" stroke-width="1.8" fill="none"/></svg>
<div class="a" style="left:538px;top:696px;width:868px;height:18px;background:#f7f7f7"></div>
<div class="a" style="left:575px;top:696px;width:831px;height:18px;background:#f0f0f0"></div>
<svg style="left:565px;top:575px" width="9" height="9" viewBox="0 0 9 9"><circle cx="4.5" cy="4.5" r="4" fill="#dde3ea" stroke="#8a9aaa" stroke-width="0.9"/><path d="M2.3 4.5h4.4" stroke="#555" stroke-width="1"/></svg>
<svg style="left:580px;top:700px" width="6" height="10"><path d="M5 1l-4 4 4 4" stroke="#b0b0b0" stroke-width="1.3" fill="none"/></svg>
<svg style="left:1375px;top:700px" width="6" height="10"><path d="M1 1l4 4-4 4" stroke="#b0b0b0" stroke-width="1.3" fill="none"/></svg>
<div class="a" style="left:1289px;top:739px;width:59px;height:25px;border:1px solid #adadad;background:#e1e1e1"></div>
<div class="t" style="left:1289px;top:745px;width:59px;text-align:center">确定</div>
<div class="a" style="left:1355px;top:739px;width:59px;height:25px;border:1px solid #adadad;background:#e1e1e1"></div>
<div class="t" style="left:1355px;top:745px;width:59px;text-align:center">取消</div>
<!-- status bar -->
<div class="a" style="left:2px;top:775px;width:1424px;height:27px;background:#f0f0f0;border-top:1px solid #dadada"></div>
<svg style="left:977px;top:780px" width="3" height="20"><g fill="#b0a080"><rect x="0" y="0" width="1.5" height="1.5"/><rect x="0" y="4" width="1.5" height="1.5"/><rect x="0" y="8" width="1.5" height="1.5"/><rect x="0" y="12" width="1.5" height="1.5"/><rect x="0" y="16" width="1.5" height="1.5"/></g></svg>
<div class="a" style="left:981px;top:778px;width:158px;height:1px;background:#c8c8c8"></div>
<div class="a" style="left:981px;top:779px;width:122px;height:20px;background:#a0a0a0"></div>
<div class="t" style="left:1001px;top:781px;color:#1a1a1a"><span class="l">849</span>兆（共 <span class="l">985</span>兆)</div>
<div class="a" style="left:1122px;top:779px;width:1px;height:20px;background:#a8a8a8"></div>
<svg style="left:1125px;top:781px" width="13" height="16" viewBox="0 0 13 16">
 <path d="M0.5 2.5h12" stroke="#5a86c8" stroke-width="1.2" fill="none"/>
 <path d="M4.5 2V1h4v1" stroke="#5a86c8" stroke-width="1" fill="none"/>
 <path d="M1.8 4h9.4l-.8 11.3H2.6z" fill="#b8d2f2" stroke="#5a86c8" stroke-width="1"/>
 <path d="M4.6 5.5v8.5M6.5 5.5v8.5M8.4 5.5v8.5" stroke="#5a86c8" stroke-width="0.9"/>
</svg>
<svg style="left:1142px;top:780px" width="3" height="20"><g fill="#b0a080"><rect x="0" y="0" width="1.5" height="1.5"/><rect x="0" y="4" width="1.5" height="1.5"/><rect x="0" y="8" width="1.5" height="1.5"/><rect x="0" y="12" width="1.5" height="1.5"/><rect x="0" y="16" width="1.5" height="1.5"/></g></svg>
<!-- dialog -->
<!-- dialog -->
<div class="a" style="left:538px;top:425px;width:518px;height:151px;border:1px solid #6a6a6a;background:#f0f0f0;box-shadow:1px 2px 16px rgba(0,0,0,0.30)"></div>
<div class="a" style="left:539px;top:426px;width:516px;height:25px;background:#fff"></div>
<svg style="left:542px;top:430px" width="17" height="17" viewBox="0 0 17 17">
 <g transform="translate(7.6 7.6)" fill="#c8161d">
  <circle r="5.6"/>
  <g id="teeth"><rect x="-1.3" y="-7.6" width="2.6" height="3" rx="0.6"/><rect x="-1.3" y="4.6" width="2.6" height="3" rx="0.6"/><rect x="-7.6" y="-1.3" width="3" height="2.6" rx="0.6"/><rect x="4.6" y="-1.3" width="3" height="2.6" rx="0.6"/>
  <g transform="rotate(45)"><rect x="-1.3" y="-7.6" width="2.6" height="3" rx="0.6"/><rect x="-1.3" y="4.6" width="2.6" height="3" rx="0.6"/><rect x="-7.6" y="-1.3" width="3" height="2.6" rx="0.6"/></g></g>
  <circle r="3.7" fill="none" stroke="#fff" stroke-width="1.5"/>
  <path d="M-1.6 1.6L1.6 -1.6" stroke="#fff" stroke-width="1.3"/>
 </g>
 <path d="M11 11l4.8 4.8" stroke="#c8161d" stroke-width="2.6" stroke-linecap="round"/>
</svg>
<div class="t" style="left:563px;top:430px">提示</div>
<svg style="left:1035px;top:433px" width="11" height="11"><path d="M0.5 0.5l10 10M10.5 0.5l-10 10" stroke="#111" stroke-width="1.1"/></svg>
<svg style="left:549px;top:465px" width="34" height="34" viewBox="0 0 34 34">
 <defs>
  <linearGradient id="ig" x1="0" y1="0" x2="1" y2="1"><stop offset="0" stop-color="#6a94ec"/><stop offset="0.5" stop-color="#2e5ccc"/><stop offset="1" stop-color="#1c3cb8"/></linearGradient>
  <linearGradient id="ist" x1="0" y1="0" x2="1" y2="0"><stop offset="0" stop-color="#c8c4b8"/><stop offset="0.5" stop-color="#fbfaf4"/><stop offset="1" stop-color="#c8c4b8"/></linearGradient>
 </defs>
 <circle cx="17" cy="17" r="15.7" fill="#fff" stroke="#707070" stroke-width="1.1"/>
 <circle cx="17" cy="17" r="13.7" fill="url(#ig)"/>
 <path d="M3.6 20C6 13 13 10 30.5 13.5A13.7 13.7 0 0 0 3.6 20z" fill="#ffffff" opacity="0.18"/>
 <circle cx="17" cy="9.2" r="2.3" fill="#fff"/>
 <rect x="15" y="13.2" width="4" height="12.8" rx="1" fill="url(#ist)"/>
</svg>
<div class="t" style="left:594px;top:467px">生成存储过程成功!</div>
<div class="a" style="left:953px;top:533px;width:91px;height:26px;border:2px solid #0078d7;background:#e1e1e1"></div>
<div class="t" style="left:953px;top:540px;width:91px;text-align:center">确定</div>

</body>
</html>
